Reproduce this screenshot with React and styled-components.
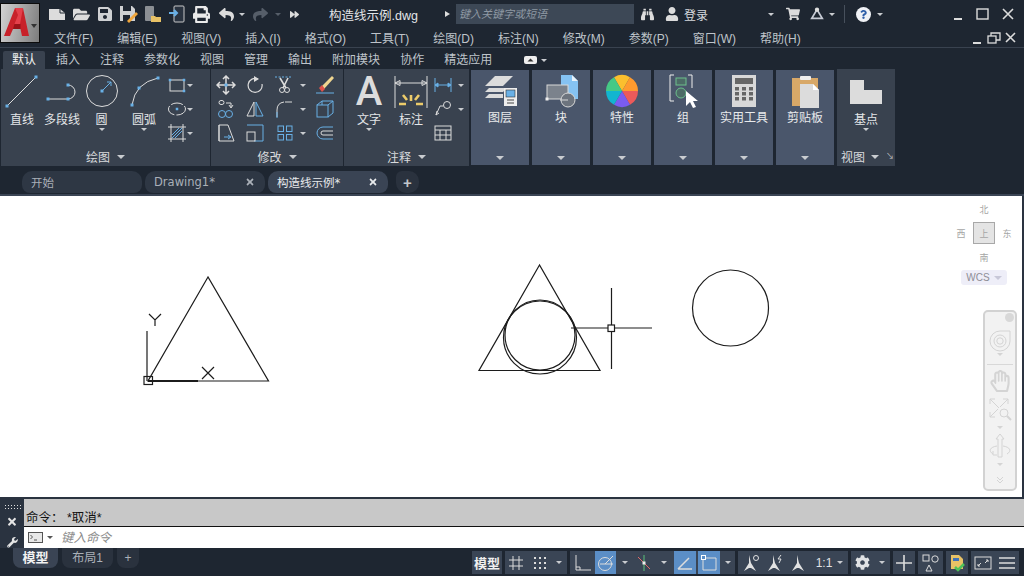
import React from 'react';
import styled, { createGlobalStyle } from 'styled-components';
import {
  FaBinoculars, FaCog, FaFolderOpen, FaForward, FaPrint, FaQuestion, FaRegHandPaper,
  FaReply, FaSave, FaShare, FaShoppingCart, FaTimes, FaUser, FaWrench,
} from 'react-icons/fa';

const W = '#dcdcdc';
const B = '#69b0e6';
const PANEL = '#39424f';
const FONT = '"Liberation Sans", "Noto Sans CJK SC", sans-serif';

const GlobalStyle = createGlobalStyle`
  html, body { margin: 0; padding: 0; background: #1e2631; }
  body { font-family: ${FONT}; }
  svg { display: block; }
`;

const Page = styled.div`
  width: 1024px;
  height: 576px;
  overflow: hidden;
  display: flex;
  flex-direction: column;
  background: #1e2631;
  color: #d6d9dd;
  font-size: 12px;
`;

const Spacer = styled.span`
  flex: none;
  width: ${p => p.$w || 0}px;
  height: ${p => p.$h || 0}px;
`;

/* ---------- header ---------- */
const Header = styled.header`
  display: flex;
  height: 48px;
  flex: none;
`;
const LogoCell = styled.div`
  width: 45px;
  flex: none;
  padding-top: 3px;
  box-sizing: border-box;
  position: relative;
  z-index: 1;
`;
const Logo = styled.div`
  width: 40px;
  height: 40px;
  position: relative;
  background: linear-gradient(100deg, #d2d2d2, #7c7c7c);
  border: 1px solid #0c0c0c;
  box-sizing: border-box;
`;
const LogoCaret = styled.span`
  position: absolute;
  right: 2px;
  bottom: 14px;
  border: 3px solid transparent;
  border-top: 4px solid #333;
  border-bottom: 0;
`;
const HeaderRows = styled.div`
  flex: 1;
  display: flex;
  flex-direction: column;
`;
const TitleRow = styled.div`
  height: 28px;
  display: flex;
  align-items: center;
`;
const Slot = styled.span`
  width: ${p => p.$w || 24}px;
  height: 24px;
  flex: none;
  display: flex;
  align-items: center;
  justify-content: center;
  color: ${p => p.$color || W};
`;
const Caret = styled.span`
  display: inline-block;
  flex: none;
  width: 0;
  height: 0;
  border: ${p => p.$s || 3}px solid transparent;
  border-top: ${p => p.$s || 3}px solid ${p => p.$color || '#c9ccd0'};
  border-bottom: 0;
`;
const DocTitle = styled.span`
  margin-left: 22px;
  width: 121px;
  flex: none;
  font-size: 12.5px;
  color: #e3e5e8;
  white-space: nowrap;
  display: flex;
  align-items: center;
  justify-content: space-between;
`;
const RightArrow = styled.i`
  border: 3.5px solid transparent;
  border-left: 5px solid #ddd;
  border-right: 0;
`;
const Search = styled.div`
  margin-left: 6px;
  width: 178px;
  height: 20px;
  flex: none;
  box-sizing: border-box;
  padding-left: 3px;
  background: #3d4856;
  color: #8e98a3;
  font-size: 11px;
  font-style: italic;
  line-height: 20px;
`;
const Login = styled.span`
  width: 92px;
  flex: none;
  display: flex;
  align-items: center;
  justify-content: space-between;
  padding-right: 2px;
  box-sizing: border-box;
`;
const Divider = styled.span`
  width: 1px;
  height: 18px;
  flex: none;
  margin: 0 7px 0 4px;
  background: #47505c;
`;
const HelpBadge = styled.span`
  width: 15px;
  height: 15px;
  border-radius: 50%;
  background: #f0f2f6;
  color: #2f5fa8;
  display: flex;
  align-items: center;
  justify-content: center;
`;
const WindowBtns = styled.div`
  margin-left: auto;
  margin-right: 4px;
  display: flex;
`;
const MenuRow = styled.nav`
  height: 20px;
  box-sizing: border-box;
  margin-left: -45px;
  padding-left: 54px;
  display: flex;
  align-items: center;
  gap: 24px;
  border-bottom: 1px solid #39424f;
  color: #bfc4ca;
`;
const MenuItem = styled.span`
  white-space: nowrap;
`;
const MdiBtns = styled.div`
  margin-left: auto;
  margin-right: 5px;
  display: flex;
`;

/* ---------- ribbon ---------- */
const RibbonTabs = styled.div`
  height: 21px;
  flex: none;
  display: flex;
  align-items: flex-end;
  gap: 2px;
  padding-left: 3px;
`;
const RibbonTab = styled.span`
  height: 18px;
  line-height: 18px;
  padding: 0 9px;
  border-radius: 2px 2px 0 0;
  background: ${p => (p.$active ? PANEL : 'transparent')};
  color: ${p => (p.$active ? '#f2f2f2' : '#bfc4ca')};
`;
const TabPill = styled.span`
  margin-left: 21px;
  width: 30px;
  height: 18px;
  display: flex;
  align-items: center;
  gap: 4px;
`;
const Ribbon = styled.section`
  height: 97px;
  flex: none;
  display: flex;
  padding-left: 1px;
  gap: 1px;
`;
const Panel = styled.div`
  width: ${p => p.$w}px;
  flex: none;
  display: flex;
  flex-direction: column;
  background: ${PANEL};
  ${p => p.$gapAfter && 'margin-right: 1px;'}
`;
const PanelBody = styled.div`
  flex: 1;
  display: flex;
  padding-top: 4px;
  padding-left: ${p => p.$pad || 0}px;
`;
const PanelFoot = styled.div`
  height: 19px;
  flex: none;
  display: flex;
  align-items: center;
  justify-content: center;
  gap: 7px;
  color: #d8dadd;
  white-space: nowrap;
  box-sizing: border-box;
`;
const ViewFoot = styled(PanelFoot)`
  justify-content: flex-start;
  padding-left: 4px;
  gap: 6px;
`;
const CornerArrow = styled.span`
  margin-left: 1px;
  color: #ccc;
  font-size: 8px;
  line-height: 1;
`;
const BigTool = styled.div`
  width: ${p => p.$w}px;
  flex: none;
  display: flex;
  flex-direction: column;
  align-items: center;
  padding-top: 2px;
`;
const BigIcon = styled.div`
  height: 34px;
  display: flex;
  align-items: center;
  justify-content: center;
`;
const BigLetter = styled.span`
  font-family: Roboto, "Liberation Sans", sans-serif;
  font-weight: 500;
  font-size: 40px;
  line-height: 34px;
  color: #dcdcdc;
`;
const ToolLabel = styled.div`
  margin-top: 3px;
  height: 16px;
  line-height: 16px;
  color: #e4e6e8;
  white-space: nowrap;
`;
const SmallCol = styled.div`
  display: flex;
  flex-direction: column;
`;
const SmallRow = styled.div`
  height: 24px;
  display: flex;
  align-items: center;
`;
const IconCell = styled.span`
  width: ${p => p.$w || 20}px;
  flex: none;
  display: flex;
  justify-content: center;
`;
const ModifyGrid = styled.div`
  display: grid;
  grid-template-columns: 29px 30px 40px 30px;
  grid-auto-rows: 24px;
  align-items: center;
`;
const Flyout = styled.div`
  width: 58px;
  flex: none;
  margin: 1px 2px 1px 0;
  padding-top: 4px;
  display: flex;
  flex-direction: column;
  align-items: center;
  background: #4a566b;
`;
const FlyoutLabel = styled.div`
  margin-top: 2px;
  height: 16px;
  line-height: 16px;
  color: #e8eaec;
  white-space: nowrap;
`;
const FlyoutCaret = styled(Caret)`
  margin-top: auto;
  margin-bottom: 5px;
`;

/* ---------- document tabs ---------- */
const DocTabs = styled.div`
  height: 30px;
  flex: none;
  box-sizing: border-box;
  display: flex;
  gap: 3px;
  padding: 5px 0 0 22px;
  border-bottom: 2px solid #3a4454;
`;
const DocTab = styled.div`
  width: 120px;
  height: 22px;
  box-sizing: border-box;
  padding: 0 10px 0 9px;
  border-radius: 10px 10px 8px 8px;
  display: flex;
  align-items: center;
  justify-content: space-between;
  background: ${p => (p.$active ? '#3a4454' : '#2e3744')};
  color: ${p => (p.$active ? '#e8eaec' : '#aab0b8')};
  font-family: "DejaVu Sans", "Noto Sans CJK SC", sans-serif;
  font-size: 11.5px;
`;
const AddDocTab = styled.div`
  width: 23px;
  height: 22px;
  margin-left: 5px;
  border-radius: 6px 10px 10px 10px;
  background: #2a323e;
  color: #c2c6cb;
  display: flex;
  align-items: center;
  justify-content: center;
  font-size: 15px;
  font-weight: 700;
`;

/* ---------- drawing area ---------- */
const Canvas = styled.main`
  flex: 1;
  position: relative;
  background: #fff;
  border-right: 2px solid #2a3340;
`;
const ViewCube = styled.div`
  position: absolute;
  left: 950px;
  top: 1px;
  width: 68px;
  display: grid;
  grid-template-columns: 1fr 24px 1fr;
  grid-template-rows: 24px 24px 24px;
  justify-items: center;
  align-items: center;
  color: #a6a6a6;
  font-size: 9px;
`;
const CubeFace = styled.div`
  width: 22px;
  height: 22px;
  box-sizing: border-box;
  border: 1px solid #a8a8a8;
  background: #e4e4e4;
  display: flex;
  align-items: center;
  justify-content: center;
`;
const WcsPill = styled.div`
  grid-column: 1 / 4;
  margin-top: 1px;
  width: 46px;
  height: 15px;
  border-radius: 3px;
  background: #eeeef8;
  color: #8d8d96;
  font-size: 10px;
  display: flex;
  align-items: center;
  justify-content: center;
  gap: 4px;
`;
const NavBar = styled.aside`
  position: absolute;
  left: 983px;
  top: 114px;
  width: 34px;
  height: 181px;
  box-sizing: border-box;
  border: 2px solid #d2d2d2;
  border-radius: 5px;
  background: #f2f2f2;
  display: flex;
  flex-direction: column;
  align-items: center;
  padding-top: 17px;
  color: #d4d4d4;
`;
const NavClose = styled.span`
  position: absolute;
  right: 1px;
  top: 1px;
  width: 9px;
  height: 9px;
  border-radius: 50%;
  background: #d8d8d8;
`;
const NavRule = styled.span`
  width: 26px;
  height: 1px;
  margin: 8px 0 5px;
  background: #d8d8d8;
`;

/* ---------- command line ---------- */
const CommandBar = styled.section`
  height: 51px;
  flex: none;
  display: flex;
  background: #2a3340;
`;
const CmdHandle = styled.div`
  width: 24px;
  flex: none;
  display: flex;
  flex-direction: column;
  align-items: center;
  padding-top: 7px;
  box-sizing: border-box;
  color: #e4e4e4;
`;
const HandleDots = styled.span`
  width: 17px;
  height: 5px;
  background-image: radial-gradient(#e0e0e0 1px, transparent 1px);
  background-size: 3px 3px;
`;
const CmdBody = styled.div`
  flex: 1;
  display: flex;
  flex-direction: column;
  padding-top: 2px;
`;
const CmdHistory = styled.div`
  height: 28px;
  box-sizing: border-box;
  padding: 11px 0 0 2px;
  line-height: 16px;
  background: #c8c8c8;
  color: #111;
  font-size: 12.5px;
`;
const CmdInput = styled.div`
  flex: 1;
  border-top: 1px solid #111;
  background: #fff;
  display: flex;
  align-items: center;
  padding-left: 4px;
  gap: 4px;
`;
const CmdPlaceholder = styled.span`
  margin-left: 4px;
  padding-bottom: 2px;
  color: #8a8a8a;
  font-style: italic;
  font-size: 12.5px;
`;

/* ---------- status bar ---------- */
const StatusBar = styled.footer`
  height: 28px;
  flex: none;
  display: flex;
  align-items: flex-start;
  padding-right: 5px;
  box-sizing: border-box;
`;
const LayoutTabs = styled.div`
  display: flex;
  gap: 4px;
  padding-left: 13px;
  margin-right: auto;
`;
const LayoutTab = styled.div`
  width: ${p => p.$w}px;
  height: 20px;
  line-height: 20px;
  text-align: center;
  border-radius: 0 0 8px 8px;
  background: ${p => (p.$active ? '#3a4454' : '#2a323e')};
  color: ${p => (p.$active ? '#f2f2f2' : '#aab0b8')};
  font-weight: ${p => (p.$active ? 700 : 400)};
  font-size: ${p => (p.$active ? 13 : 12)}px;
`;
const StatusGroups = styled.div`
  display: flex;
  gap: 3px;
  padding-top: 3px;
`;
const StatusGroup = styled.div`
  width: ${p => p.$w}px;
  height: 23px;
  display: flex;
  align-items: center;
  background: #3a4555;
`;
const StatusSlot = styled.span`
  width: ${p => p.$w}px;
  height: 23px;
  flex: none;
  display: flex;
  align-items: center;
  justify-content: center;
  background: ${p => (p.$active ? '#5b8ec6' : 'transparent')};
  color: #e0e2e4;
`;
const ModelLabel = styled.span`
  font-weight: 700;
  font-size: 13px;
  color: #f0f0f0;
`;

/* ---------- small drawing helpers ---------- */
const Ico = ({ w = 20, h = 20, sw = 1, stroke = W, children }) => (
  <svg width={w} height={h} viewBox={`0 0 ${w} ${h}`} fill="none" stroke={stroke} strokeWidth={sw}>
    {children}
  </svg>
);
const Dot = ({ x, y, s = 3 }) => <rect x={x - s / 2} y={y - s / 2} width={s} height={s} fill={B} stroke="none" />;

const LogoA = () => (
  <svg width="38" height="38" viewBox="0 0 38 38">
    <path d="M3 32 L14 4 H22 L28 32 H21 L19.5 25 H12 L9 32 Z" fill="#c8222a" />
    <path d="M14 4 L22 4 L19 20 H13.5 L17 11 Z" fill="#e4404a" />
    <path d="M13.5 20 H19.5 L19.5 25 H12 Z" fill="#9a1318" />
  </svg>
);

const NewIcon = () => (
  <Ico w={18} h={14}><path d="M1 2h11l5 4v7H1z" fill={W} stroke="none" /><path d="M12 2v4h5" stroke="#1e2631" /></Ico>
);
const SaveAsIcon = () => (
  <Ico w={20} h={18}>
    <path d="M1 1h12l3 3v12H1z" fill="#cfd1d3" stroke="none" />
    <rect x="4" y="1" width="8" height="5" fill="#1e2631" stroke="none" />
    <rect x="4" y="10" width="7" height="6" fill="#1e2631" stroke="none" />
    <path d="M8 16l9-9 2 2-9 9z" fill="#f0a63c" stroke="none" />
  </Ico>
);
const PhoneFolderIcon = () => (
  <Ico w={18} h={18}>
    <rect x="1" y="1" width="9" height="15" rx="1" fill="#8b8f94" stroke="none" />
    <path d="M7 11h4l1 1h5v5H7z" fill="#e8c266" stroke="none" />
  </Ico>
);
const PhoneArrowIcon = () => (
  <Ico w={18} h={18}>
    <rect x="6" y="1" width="10" height="16" rx="1" stroke="#c8c8c8" fill="#2a3340" />
    <path d="M1 8h7M6 5l3 3-3 3" stroke={B} strokeWidth="2" />
  </Ico>
);
const AppsIcon = () => (
  <Ico w={16} h={14} sw={2}><path d="M8 2L2 12h12z" stroke="#c8ccd6" /><circle cx="8" cy="2" r="1.5" fill="#fff" /></Ico>
);
const Minimize = ({ w = 10 }) => <Ico w={w} h={14} sw={2}><path d={`M1 12h${w - 2}`} /></Ico>;
const Maximize = () => <Ico w={14} h={14} sw={1.4}><rect x="1" y="2" width="11" height="10" /></Ico>;
const CloseX = ({ s = 14 }) => <Ico w={s} h={s} sw={1.6}><path d={`M2 2L${s - 2} ${s - 2}M${s - 2} 2L2 ${s - 2}`} /></Ico>;
const Restore = () => <Ico w={14} h={14} sw={1.3}><rect x="1" y="5" width="8" height="7" /><path d="M4 5V2h9v7h-4" /></Ico>;
const PillIcon = () => (
  <Ico w={13} h={8}><rect width="13" height="8" rx="2" fill="#eee" stroke="none" /><path d="M3.5 5.5L6.5 2.5 9.5 5.5z" fill="#333" stroke="none" /></Ico>
);

/* big ribbon tools */
const LineIcon = () => (
  <Ico w={34} h={34}><path d="M2 31L31 2" /><Dot x={2} y={31} /><Dot x={31} y={2} /></Ico>
);
const PolylineIcon = () => (
  <Ico w={34} h={34}><path d="M3 24H23A7 7 0 0 0 23 10" /><Dot x={3} y={24} /><Dot x={23} y={24} /><Dot x={23} y={10} /></Ico>
);
const CircleIcon = () => (
  <Ico w={34} h={34}>
    <circle cx="17" cy="16" r="15.5" />
    <path d="M17 16L26 7M22 7h4v4" stroke={B} />
    <Dot x={17} y={16} />
  </Ico>
);
const ArcIcon = () => (
  <Ico w={34} h={34}><path d="M5 30Q8 8 31 3" /><Dot x={5} y={30} /><Dot x={12} y={13} /><Dot x={31} y={3} /></Ico>
);
const DimIcon = () => (
  <Ico w={34} h={34}>
    <path d="M1 1V33M33 1V33M1 8H33M1 8l5-2.5v5zM33 8l-5-2.5v5z" />
    <path d="M17 20V26M9 20l4 5M25 20l-4 5M5 29h7M22 29h7" stroke="#eccb6a" strokeWidth="2.6" />
  </Ico>
);

/* small draw / modify */
const RectIcon = () => (
  <Ico><rect x="3" y="5" width="14" height="11" /><Dot x={3} y={5} s={2.5} /><Dot x={17} y={5} s={2.5} /><Dot x={17} y={16} s={2.5} /></Ico>
);
const EllipseIcon = () => (
  <Ico><ellipse cx="10" cy="10" rx="8.5" ry="6" strokeDasharray="12 2" /><Dot x={10} y={10} s={2.5} /></Ico>
);
const HatchIcon = () => (
  <Ico>
    <path d="M1 4H19M1 16H19M4 1V19M16 1V19" />
    <path d="M5 12L12 5M5 15L15 5M8 15L15 8" stroke={B} />
  </Ico>
);
const MoveIcon = () => (
  <Ico sw={1.5}>
    <path d="M10 1V19M1 10H19M7 4l3-3 3 3M7 16l3 3 3-3M4 7l-3 3 3 3M16 7l3 3-3 3" />
    <Dot x={10} y={10} />
  </Ico>
);
const RotateIcon = () => (
  <Ico sw={1.2}><path d="M13 4A7 7 0 1 0 17 9" /><path d="M9 1l5 3-5 3z" fill={W} stroke="none" /></Ico>
);
const TrimIcon = () => (
  <Ico>
    <path d="M0 2H17" stroke={B} strokeDasharray="2 1.5" />
    <path d="M5 3l6 10M13 3L8 13" strokeWidth="1.6" />
    <circle cx="7" cy="15" r="2.5" /><circle cx="12" cy="15" r="2.5" />
  </Ico>
);
const EraserIcon = () => (
  <Ico>
    <path d="M7 11L17 1l2 2L9 14z" fill="#f0d690" stroke="none" />
    <path d="M4 13l3-3 3 4-3 3z" fill="#e0524a" stroke="none" />
    <path d="M1 18H19" stroke={B} />
  </Ico>
);
const CopyIcon = () => (
  <Ico>
    <rect x="3" y="1.5" width="5" height="4" rx="2" />
    <path d="M10 4h5v4M13 6l2 3 2-3" />
    <circle cx="6" cy="15" r="3.5" stroke={B} /><circle cx="13" cy="15" r="3.5" stroke={B} />
  </Ico>
);
const MirrorIcon = () => (
  <Ico><path d="M9 3v14H2z" /><path d="M11 3v14h7z" stroke={B} /></Ico>
);
const FilletIcon = () => (
  <Ico><path d="M2 18V11Q2 4 9 3" /><path d="M10 3h7" /><path d="M2 19V13" stroke={B} /></Ico>
);
const BoxIcon = () => (
  <Ico stroke={B}><rect x="2" y="6" width="11" height="12" /><path d="M2 6l5-4h11v12l-5 4M13 6l5-4M7 6V2" /></Ico>
);
const StretchIcon = () => (
  <Ico><path d="M3 2h9l6 16H3zM3 2V18" /><path d="M8 14h6M12 12l3 2-3 2" stroke={B} /></Ico>
);
const ScaleIcon = () => (
  <Ico><path d="M2 2H18V18H9" stroke={B} /><rect x="2" y="9" width="8" height="9" /></Ico>
);
const ArrayIcon = () => (
  <Ico stroke={B}><rect x="3" y="3" width="5.5" height="5.5" /><rect x="11.5" y="3" width="5.5" height="5.5" /><rect x="3" y="11.5" width="5.5" height="5.5" /><rect x="11.5" y="11.5" width="5.5" height="5.5" /></Ico>
);
const OffsetIcon = () => (
  <Ico>
    <path d="M18 4H8a6 6 0 0 0 0 12H18" stroke={B} />
    <path d="M18 8H8a2 2 0 0 0 0 4H18" />
  </Ico>
);
const DimSmallIcon = () => (
  <Ico stroke={B}><path d="M2 3V17M18 3V17M2 10H18" /><path d="M2 10l3-2v4zM18 10l-3-2v4z" fill={B} /></Ico>
);
const LeaderIcon = () => (
  <Ico><circle cx="14" cy="6" r="3.5" /><path d="M10.5 7H7L3 16M3 16l1-4M3 16l3-2" /></Ico>
);
const TableIcon = () => (
  <Ico><rect x="2" y="3" width="16" height="14" /><path d="M2 7H18M2 12H18M7 7V17M13 7V17" /></Ico>
);

/* collapsed panels */
const LayersIcon = () => (
  <Ico w={34} h={34} stroke="none">
    <path d="M2 12L12 2H30L20 12z" fill="#dcdcdc" />
    <path d="M2 18L6 14H24L20 18z" fill="#dcdcdc" />
    <path d="M2 24L6 20H20V24z" fill="#dcdcdc" />
    <rect x="21" y="14" width="13" height="18" fill="#eee" />
    <rect x="23" y="16" width="9" height="7" fill={B} stroke="#333" strokeWidth=".6" />
    <path d="M24 26h7M24 29h7" stroke="#444" />
  </Ico>
);
const BlockIcon = () => (
  <Ico w={34} h={34}>
    <path d="M17 1h11l6 6v18H17z" fill="#85c2f2" stroke="none" />
    <path d="M28 1l6 6h-6z" fill="#e8f2fa" stroke="none" />
    <rect x="3" y="11" width="21" height="14" fill="#7b828c" stroke="#d8d8d8" />
    <circle cx="24" cy="26" r="7" fill="#6d747e" stroke="#d8d8d8" />
    <path d="M24 26H16" stroke="#d8d8d8" />
    <rect x="1.5" y="23.5" width="3" height="3" fill="#eee" stroke="none" />
  </Ico>
);
const wheelColors = ['#fbbf2e', '#ff9a2e', '#ec5a5a', '#7a5cf0', '#12b5d0', '#45c985'];
const WheelIcon = () => (
  <Ico w={34} h={34} stroke="none">
    {wheelColors.map((c, i) => {
      const a0 = ((i * 60 - 120) * Math.PI) / 180;
      const a1 = ((i * 60 - 60) * Math.PI) / 180;
      return (
        <path key={c} fill={c} d={`M17 17L${17 + 16 * Math.cos(a0)} ${17 + 16 * Math.sin(a0)}A16 16 0 0 1 ${17 + 16 * Math.cos(a1)} ${17 + 16 * Math.sin(a1)}Z`} />
      );
    })}
  </Ico>
);
const GroupIcon = () => (
  <Ico w={34} h={34}>
    <path d="M8 1H4V27H8M22 1H26V14" stroke="#eee" />
    <rect x="10" y="4" width="10" height="7" stroke="#6cc08c" fill="#4c6b66" />
    <circle cx="15" cy="19" r="5" stroke="#6cc08c" fill="#4c6b66" />
    <path d="M20 17V32l4-4 3 6 3-1-3-6h5z" fill="#fff" stroke="none" />
  </Ico>
);
const CalcIcon = () => (
  <Ico w={34} h={34} stroke="none">
    <rect x="5" y="1" width="24" height="32" fill="#d8d8d8" />
    <rect x="8" y="4" width="18" height="6" fill="#666" />
    {[13, 18, 23].map(y => [8, 15, 22].map(x => <rect key={`${x}-${y}`} x={x} y={y} width="4" height="3.5" fill="#666" />))}
  </Ico>
);
const ClipboardIcon = () => (
  <Ico w={34} h={34} stroke="none">
    <rect x="4" y="4" width="26" height="28" fill="#d8a868" />
    <rect x="12" y="2" width="11" height="4" rx="1" fill="#eee" />
    <path d="M12 10h13l6 6v18H12z" fill="#dcdcdc" />
    <path d="M25 10l6 6h-6z" fill="#fff" />
  </Ico>
);
const BasePointIcon = () => (
  <Ico w={34} h={26} stroke="none"><path d="M1 1H15V11H33V25H1z" fill="#dcdcdc" /></Ico>
);

/* status bar */
const GridIcon = () => (
  <Ico w={16} h={16} sw={1}><path d="M1 5H15M1 11H15M5 1V15M11 1V15" /></Ico>
);
const SnapDots = () => (
  <Ico w={14} h={14} stroke="none">
    {[2, 7, 12].map(y => [2, 7, 12].map(x => <rect key={`${x}${y}`} x={x - 1} y={y - 1} width="2" height="2" fill={W} />))}
  </Ico>
);
const OrthoIcon = () => <Ico w={18} h={18}><path d="M2 1V16H17" /><path d="M2 13h4v3" /></Ico>;
const PolarIcon = () => (
  <Ico w={18} h={18}><circle cx="8" cy="10" r="6.5" /><path d="M3 10H16M8 10L16 2" /></Ico>
);
const OsnapIcon = () => (
  <Ico w={18} h={18}><path d="M9 1V17" stroke="#5ac07a" /><path d="M3 3L15 15" stroke="#e06a6a" /><rect x="7.5" y="7.5" width="3" height="3" fill="#eee" stroke="none" /></Ico>
);
const AngleIcon = () => <Ico w={18} h={18} sw={1.5}><path d="M2 15H16M2 15L13 4" /></Ico>;
const SquareSnapIcon = () => (
  <Ico w={18} h={18}><path d="M4 4H16V16H3V6" /><rect x="1.5" y="1.5" width="4" height="4" fill="#5b8ec6" stroke="#fff" /></Ico>
);
const AnnoIcon = ({ mark }) => (
  <Ico w={18} h={18} stroke="none">
    <path d="M7 1l2 8 5 8-5-3-2 0-5 3 5-8z" fill="#e2e2e2" />
    {mark === 'o' && <circle cx="14" cy="4" r="2.5" stroke="#e2e2e2" />}
    {mark === 'bolt' && <path d="M15 1l-3 4h3l-2 4" stroke="#e2e2e2" />}
  </Ico>
);
const ShapesIcon = () => (
  <Ico w={18} h={18} sw={1}><rect x="1" y="1" width="6" height="6" /><circle cx="13" cy="5" r="3.2" /><path d="M7 11l3 6H4z" /></Ico>
);
const WorkspaceIcon = () => (
  <Ico w={18} h={18} stroke="none">
    <path d="M3 1H11L15 5V15H3z" fill="#e8c266" />
    <rect x="5" y="4" width="6" height="3" fill="#3f72b8" />
    <path d="M7 13l3 3 6-6" stroke="#4fc25a" strokeWidth="2.6" />
  </Ico>
);
const FullscreenIcon = () => (
  <Ico w={18} h={14} sw={1}><rect x="1" y="1" width="16" height="12" /><path d="M4 10l3-3M4 10h2M4 10V8M14 4l-3 3M14 4h-2M14 4v2" /></Ico>
);
const HamburgerIcon = () => <Ico w={18} h={14} sw={1.6}><path d="M1 2H17M1 7H17M1 12H17" /></Ico>;
const PlusIcon = ({ s = 18 }) => <Ico w={s} h={s} sw={1.6}><path d={`M${s / 2} 1V${s - 1}M1 ${s / 2}H${s - 1}`} /></Ico>;
const PromptIcon = () => (
  <Ico w={15} h={11} sw={1} stroke="#555"><rect x=".5" y=".5" width="14" height="10" fill="#e8e8e8" /><path d="M2.5 3l2 2-2 2M6 8h3" /></Ico>
);

/* nav bar */
const SteeringIcon = () => (
  <Ico w={24} h={24} stroke="#d4d4d4"><path d="M12 2a10 10 0 1 0 10 10V2z" /><circle cx="12" cy="12" r="6" /><circle cx="12" cy="12" r="3.2" /></Ico>
);
const ZoomNavIcon = () => (
  <Ico w={24} h={24} stroke="#d4d4d4">
    <path d="M2 2L11 11M2 2h5M2 2v5M20 2l-8 8M20 2h-5M20 2v5M2 20l8-8M2 20h5M2 20v-5" />
    <circle cx="16" cy="16" r="4" /><path d="M19 19l4 4" strokeWidth="2" />
  </Ico>
);
const OrbitNavIcon = () => (
  <Ico w={26} h={26} stroke="#d4d4d4">
    <path d="M13 1l4 5h-2v18h-4V6H9z" />
    <path d="M10 13C3 14 1 18 6 21M16 13c7 1 9 5 4 8" />
    <path d="M6 18v4h4" />
  </Ico>
);
const DoubleDown = () => (
  <Ico w={8} h={8} stroke="#d4d4d4"><path d="M1 1l3 3 3-3M1 4l3 3 3-3" /></Ico>
);

const menus = ['文件(F)', '编辑(E)', '视图(V)', '插入(I)', '格式(O)', '工具(T)', '绘图(D)', '标注(N)', '修改(M)', '参数(P)', '窗口(W)', '帮助(H)'];
const ribbonTabs = ['默认', '插入', '注释', '参数化', '视图', '管理', '输出', '附加模块', '协作', '精选应用'];
const modifyTools = [
  [MoveIcon], [RotateIcon], [TrimIcon, true], [EraserIcon],
  [CopyIcon], [MirrorIcon], [FilletIcon, true], [BoxIcon],
  [StretchIcon], [ScaleIcon], [ArrayIcon, true], [OffsetIcon],
];
const flyouts = [
  ['图层', LayersIcon], ['块', BlockIcon], ['特性', WheelIcon],
  ['组', GroupIcon], ['实用工具', CalcIcon], ['剪贴板', ClipboardIcon],
];

const Drawing = () => (
  <svg width="1022" height="301" viewBox="0 196 1022 301" fill="none" stroke="#1c1c1c" strokeWidth="1.2">
    <path d="M208 277L148 381H268.5Z" />
    <path d="M147 331V381" />
    <path d="M148 381H198" strokeWidth="2" />
    <rect x="144" y="376.5" width="8.5" height="8" />
    <path d="M149 314L155 320L161 314M155 320V326" />
    <path d="M202 367L214 379M214 367L202 379" />
    <path d="M539.5 265L479 370.5H600Z" />
    <circle cx="540" cy="335" r="35" />
    <circle cx="540" cy="337.5" r="36.5" />
    <path d="M571 328H652M611.5 288V369" />
    <rect x="608" y="325" width="6.5" height="6.5" fill="#fff" />
    <circle cx="730.5" cy="308" r="38" />
  </svg>
);

export default function App() {
  return (
    <Page>
      <GlobalStyle />
      <Header>
        <LogoCell>
          <Logo>
            <LogoA />
            <LogoCaret />
          </Logo>
        </LogoCell>
        <HeaderRows>
          <TitleRow>
            <Slot><NewIcon /></Slot>
            <Slot><FaFolderOpen size={17} /></Slot>
            <Slot $color="#cfd1d3"><FaSave size={16} /></Slot>
            <Slot><SaveAsIcon /></Slot>
            <Slot><PhoneFolderIcon /></Slot>
            <Slot><PhoneArrowIcon /></Slot>
            <Slot $color="#eaeaea"><FaPrint size={17} /></Slot>
            <Slot $w={26}><FaReply size={15} /></Slot>
            <Slot $w={6}><Caret /></Slot>
            <Slot $w={30} $color="#565e69"><FaShare size={15} /></Slot>
            <Slot $w={6}><Caret $color="#565e69" /></Slot>
            <Slot $w={26}><FaForward size={9} /></Slot>
            <DocTitle>构造线示例.dwg<RightArrow /></DocTitle>
            <Search>键入关键字或短语</Search>
            <Slot $w={26}><FaBinoculars size={13} /></Slot>
            <Slot $w={24}><FaUser size={14} /></Slot>
            <Login>登录<Caret /></Login>
            <Slot $w={34}><FaShoppingCart size={14} /></Slot>
            <Slot $w={14}><AppsIcon /></Slot>
            <Slot $w={16}><Caret /></Slot>
            <Divider />
            <Slot $w={22}><HelpBadge><FaQuestion size={9} /></HelpBadge></Slot>
            <Slot $w={12}><Caret /></Slot>
            <WindowBtns>
              <Slot $w={25}><Minimize /></Slot>
              <Slot $w={25}><Maximize /></Slot>
              <Slot $w={25}><CloseX /></Slot>
            </WindowBtns>
          </TitleRow>
          <MenuRow>
            {menus.map(m => <MenuItem key={m}>{m}</MenuItem>)}
            <MdiBtns>
              <Slot $w={17}><Minimize /></Slot>
              <Slot $w={17}><Restore /></Slot>
              <Slot $w={17}><CloseX s={13} /></Slot>
            </MdiBtns>
          </MenuRow>
        </HeaderRows>
      </Header>

      <RibbonTabs>
        {ribbonTabs.map((t, i) => <RibbonTab key={t} $active={i === 0}>{t}</RibbonTab>)}
        <TabPill><PillIcon /><Caret /></TabPill>
      </RibbonTabs>

      <Ribbon>
        <Panel $w={209}>
          <PanelBody $pad={1}>
            <BigTool $w={40}><BigIcon><LineIcon /></BigIcon><ToolLabel>直线</ToolLabel></BigTool>
            <BigTool $w={40}><BigIcon><PolylineIcon /></BigIcon><ToolLabel>多段线</ToolLabel></BigTool>
            <BigTool $w={39}><BigIcon><CircleIcon /></BigIcon><ToolLabel>圆</ToolLabel><Caret /></BigTool>
            <BigTool $w={46}><BigIcon><ArcIcon /></BigIcon><ToolLabel>圆弧</ToolLabel><Caret /></BigTool>
            <SmallCol>
              <SmallRow><IconCell><RectIcon /></IconCell><Caret /></SmallRow>
              <SmallRow><IconCell><EllipseIcon /></IconCell><Caret /></SmallRow>
              <SmallRow><IconCell><HatchIcon /></IconCell><Caret /></SmallRow>
            </SmallCol>
          </PanelBody>
          <PanelFoot>绘图<Caret $s={4} /></PanelFoot>
        </Panel>
        <Panel $w={132}>
          <PanelBody>
            <ModifyGrid>
              {modifyTools.map(([Icon, more], i) => (
                <SmallRow key={i}>
                  <IconCell $w={i % 4 === 0 ? 29 : 30}><Icon /></IconCell>
                  {more && <Caret />}
                </SmallRow>
              ))}
            </ModifyGrid>
          </PanelBody>
          <PanelFoot>修改<Caret $s={4} /></PanelFoot>
        </Panel>
        <Panel $w={125} $gapAfter>
          <PanelBody>
            <BigTool $w={50}><BigIcon><BigLetter>A</BigLetter></BigIcon><ToolLabel>文字</ToolLabel><Caret /></BigTool>
            <BigTool $w={34}><BigIcon><DimIcon /></BigIcon><ToolLabel>标注</ToolLabel></BigTool>
            <SmallCol>
              <SmallRow><IconCell $w={30}><DimSmallIcon /></IconCell><Caret /></SmallRow>
              <SmallRow><IconCell $w={30}><LeaderIcon /></IconCell><Caret /></SmallRow>
              <SmallRow><IconCell $w={30}><TableIcon /></IconCell></SmallRow>
            </SmallCol>
          </PanelBody>
          <PanelFoot>注释<Caret $s={4} /></PanelFoot>
        </Panel>
        {flyouts.map(([label, Icon]) => (
          <Flyout key={label}>
            <Icon />
            <FlyoutLabel>{label}</FlyoutLabel>
            <FlyoutCaret $s={4} />
          </Flyout>
        ))}
        <Panel $w={58}>
          <PanelBody>
            <BigTool $w={58}><BigIcon><BasePointIcon /></BigIcon><ToolLabel>基点</ToolLabel><Caret /></BigTool>
          </PanelBody>
          <ViewFoot>视图<Caret $s={4} /><CornerArrow>↘</CornerArrow></ViewFoot>
        </Panel>
      </Ribbon>

      <DocTabs>
        <DocTab>开始</DocTab>
        <DocTab>Drawing1*<FaTimes size={10} /></DocTab>
        <DocTab $active>构造线示例*<FaTimes size={10} /></DocTab>
        <AddDocTab>+</AddDocTab>
      </DocTabs>

      <Canvas>
        <Drawing />
        <ViewCube>
          <span />
          <span>北</span>
          <span />
          <span>西</span>
          <CubeFace>上</CubeFace>
          <span>东</span>
          <span />
          <span>南</span>
          <span />
          <WcsPill>WCS<Caret $s={4} $color="#c8c8d8" /></WcsPill>
        </ViewCube>
        <NavBar>
          <NavClose />
          <SteeringIcon />
          <Caret $color="#d4d4d4" />
          <NavRule />
          <FaRegHandPaper size={22} />
          <Spacer $h={5} />
          <ZoomNavIcon />
          <Spacer $h={5} />
          <Caret $color="#d4d4d4" />
          <Spacer $h={4} />
          <OrbitNavIcon />
          <Spacer $h={4} />
          <Caret $color="#d4d4d4" />
          <Spacer $h={10} />
          <DoubleDown />
        </NavBar>
      </Canvas>

      <CommandBar>
        <CmdHandle>
          <HandleDots />
          <Spacer $h={7} />
          <FaTimes size={12} />
          <Spacer $h={10} />
          <FaWrench size={11} />
        </CmdHandle>
        <CmdBody>
          <CmdHistory>命令： *取消*</CmdHistory>
          <CmdInput>
            <PromptIcon />
            <Caret $color="#555" />
            <CmdPlaceholder>键入命令</CmdPlaceholder>
          </CmdInput>
        </CmdBody>
      </CommandBar>

      <StatusBar>
        <LayoutTabs>
          <LayoutTab $w={45} $active>模型</LayoutTab>
          <LayoutTab $w={51}>布局1</LayoutTab>
          <LayoutTab $w={22}>+</LayoutTab>
        </LayoutTabs>
        <StatusGroups>
          <StatusGroup $w={30}><StatusSlot $w={30}><ModelLabel>模型</ModelLabel></StatusSlot></StatusGroup>
          <StatusGroup $w={62}>
            <StatusSlot $w={22}><GridIcon /></StatusSlot>
            <StatusSlot $w={26}><SnapDots /></StatusSlot>
            <StatusSlot $w={12}><Caret /></StatusSlot>
          </StatusGroup>
          <StatusGroup $w={165}>
            <StatusSlot $w={25}><OrthoIcon /></StatusSlot>
            <StatusSlot $w={21} $active><PolarIcon /></StatusSlot>
            <StatusSlot $w={18}><Caret /></StatusSlot>
            <StatusSlot $w={20}><OsnapIcon /></StatusSlot>
            <StatusSlot $w={20}><Caret /></StatusSlot>
            <StatusSlot $w={22} $active><AngleIcon /></StatusSlot>
            <Spacer $w={2} />
            <StatusSlot $w={22} $active><SquareSnapIcon /></StatusSlot>
            <StatusSlot $w={15}><Caret /></StatusSlot>
          </StatusGroup>
          <StatusGroup $w={110}>
            <StatusSlot $w={26}><AnnoIcon mark="o" /></StatusSlot>
            <StatusSlot $w={22}><AnnoIcon mark="bolt" /></StatusSlot>
            <StatusSlot $w={26}><AnnoIcon /></StatusSlot>
            <StatusSlot $w={24}>1:1</StatusSlot>
            <StatusSlot $w={8}><Caret /></StatusSlot>
          </StatusGroup>
          <StatusGroup $w={39}>
            <StatusSlot $w={22}><FaCog size={15} /></StatusSlot>
            <StatusSlot $w={17}><Caret /></StatusSlot>
          </StatusGroup>
          <StatusGroup $w={22}><StatusSlot $w={22}><PlusIcon /></StatusSlot></StatusGroup>
          <StatusGroup $w={25}><StatusSlot $w={25}><ShapesIcon /></StatusSlot></StatusGroup>
          <StatusGroup $w={22}><StatusSlot $w={22}><WorkspaceIcon /></StatusSlot></StatusGroup>
          <StatusGroup $w={48}>
            <StatusSlot $w={24}><FullscreenIcon /></StatusSlot>
            <StatusSlot $w={24}><HamburgerIcon /></StatusSlot>
          </StatusGroup>
        </StatusGroups>
      </StatusBar>
    </Page>
  );
}
